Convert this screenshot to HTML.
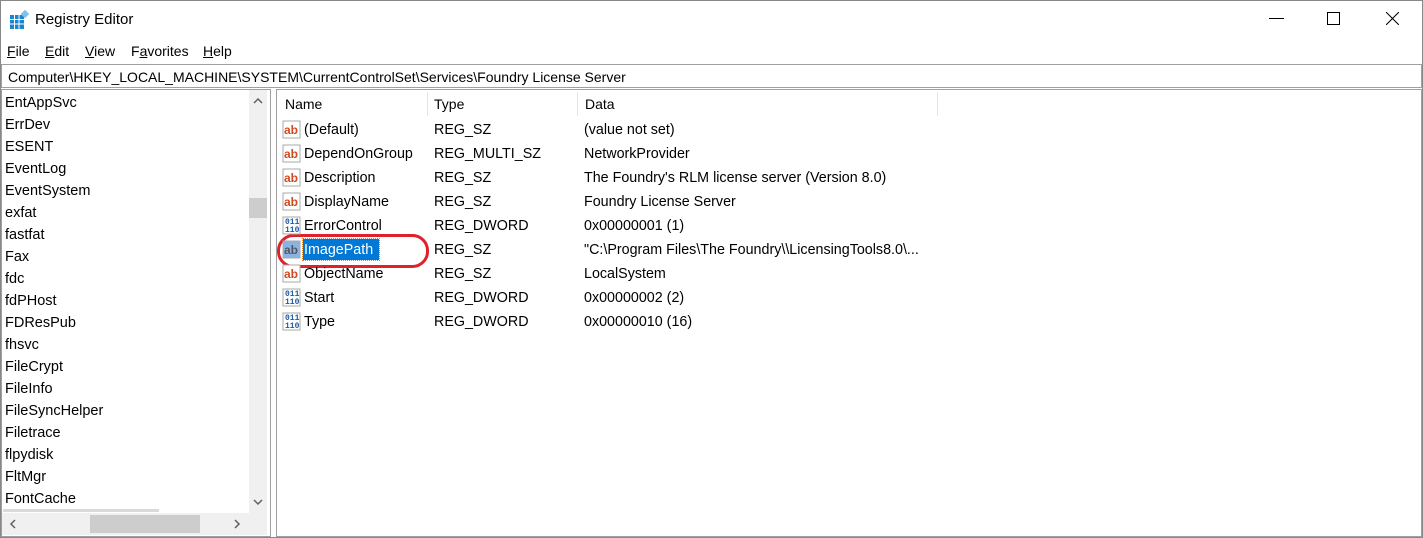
<!DOCTYPE html><html><head><style>
body{margin:0;width:1423px;height:538px;background:#fff;font-family:"Liberation Sans",sans-serif;font-size:14px;color:#000;position:relative;overflow:hidden}
.a{position:absolute;white-space:nowrap}
</style></head><body>
<div class="a" style="left:0;top:0;width:1423px;height:538px;border:1px solid #888;box-sizing:border-box"></div>
<svg class="a" style="left:9px;top:10px" width="20" height="20"><rect x="1" y="5" width="14" height="14" fill="#1a86d0"/><path d="M1 9.5H15M1 14H15M5.5 5V19M10 5V19" stroke="#fff" stroke-width="1"/><rect x="13" y="1" width="6" height="6" fill="#7fc2ee" transform="rotate(45 16 4)"/></svg>
<div class="a" style="left:35px;top:11px;font-size:15px">Registry Editor</div>
<div class="a" style="left:1269px;top:18px;width:15px;height:1px;background:#000"></div>
<div class="a" style="left:1327px;top:12px;width:11px;height:11px;border:1px solid #000"></div>
<svg class="a" style="left:1386px;top:12px" width="13" height="13"><path d="M0 0L13 13M13 0L0 13" stroke="#000"/></svg>
<div class="a" style="left:7px;top:43px"><u>F</u>ile</div>
<div class="a" style="left:45px;top:43px"><u>E</u>dit</div>
<div class="a" style="left:85px;top:43px"><u>V</u>iew</div>
<div class="a" style="left:131px;top:43px">F<u>a</u>vorites</div>
<div class="a" style="left:203px;top:43px"><u>H</u>elp</div>
<div class="a" style="left:1px;top:64px;width:1421px;height:24px;border:1px solid #a0a0a0;box-sizing:border-box"></div>
<div class="a" style="left:8px;top:69px">Computer\HKEY_LOCAL_MACHINE\SYSTEM\CurrentControlSet\Services\Foundry License Server</div>
<div class="a" style="left:1px;top:89px;width:270px;height:448px;border:1px solid #a0a0a0;box-sizing:border-box"></div>
<div class="a" style="left:276px;top:89px;width:1146px;height:448px;border:1px solid #a0a0a0;box-sizing:border-box"></div>
<div class="a" style="left:249px;top:90px;width:18px;height:424px;background:#f0f0f0"></div>
<div class="a" style="left:249px;top:198px;width:18px;height:20px;background:#cdcdcd"></div>
<svg class="a" style="left:252px;top:96px" width="12" height="10"><path d="M2 7L6 3L10 7" stroke="#606060" fill="none" stroke-width="1.5"/></svg>
<svg class="a" style="left:252px;top:497px" width="12" height="10"><path d="M2 3L6 7L10 3" stroke="#606060" fill="none" stroke-width="1.5"/></svg>
<div class="a" style="left:2px;top:513px;width:265px;height:22px;background:#f0f0f0"></div>
<div class="a" style="left:90px;top:515px;width:110px;height:18px;background:#cdcdcd"></div>
<div class="a" style="left:3px;top:509px;width:156px;height:3px;background:#dadada"></div>
<svg class="a" style="left:8px;top:518px" width="10" height="12"><path d="M7 2L3 6L7 10" stroke="#606060" fill="none" stroke-width="1.5"/></svg>
<svg class="a" style="left:232px;top:518px" width="10" height="12"><path d="M3 2L7 6L3 10" stroke="#606060" fill="none" stroke-width="1.5"/></svg>
<div class="a" style="left:5px;top:92px;line-height:22px;font-size:14.5px">EntAppSvc<br>ErrDev<br>ESENT<br>EventLog<br>EventSystem<br>exfat<br>fastfat<br>Fax<br>fdc<br>fdPHost<br>FDResPub<br>fhsvc<br>FileCrypt<br>FileInfo<br>FileSyncHelper<br>Filetrace<br>flpydisk<br>FltMgr<br>FontCache</div>
<div class="a" style="left:427px;top:92px;width:1px;height:24px;background:#e5e5e5"></div>
<div class="a" style="left:577px;top:92px;width:1px;height:24px;background:#e5e5e5"></div>
<div class="a" style="left:937px;top:92px;width:1px;height:24px;background:#e5e5e5"></div>
<div class="a" style="left:285px;top:96px">Name</div>
<div class="a" style="left:434px;top:96px">Type</div>
<div class="a" style="left:585px;top:96px">Data</div>
<div class="a" style="left:303px;top:239px;width:76px;height:21px;background:#0078d7;outline:1px dotted #e08020"></div>
<svg class="a" style="left:276px;top:233px" width="154" height="36"><rect x="2.5" y="2.5" width="149" height="31" rx="15" fill="none" stroke="#e0202a" stroke-width="3"/></svg>
<div class="a" style="left:304px;top:118px;line-height:24px;font-size:14.3px">(Default)<br>DependOnGroup<br>Description<br>DisplayName<br>ErrorControl<br><span style="color:#fff">ImagePath</span><br>ObjectName<br>Start<br>Type</div>
<div class="a" style="left:434px;top:118px;line-height:24px;font-size:14.3px">REG_SZ<br>REG_MULTI_SZ<br>REG_SZ<br>REG_SZ<br>REG_DWORD<br>REG_SZ<br>REG_SZ<br>REG_DWORD<br>REG_DWORD</div>
<div class="a" style="left:584px;top:118px;line-height:24px;font-size:14.3px">(value not set)<br>NetworkProvider<br>The Foundry's RLM license server (Version 8.0)<br>Foundry License Server<br>0x00000001 (1)<br>"C:\Program Files\The Foundry\\LicensingTools8.0\...<br>LocalSystem<br>0x00000002 (2)<br>0x00000010 (16)</div>
<svg class="a" style="left:282px;top:120px" width="20" height="216">
<g font-family="Liberation Sans" font-weight="bold" font-size="12">
<g><rect x="1" y="1" width="17" height="17" fill="#fff" stroke="#aaa"/><text x="2" y="14" fill="#d04a20">ab</text></g>
<g transform="translate(0,24)"><rect x="1" y="1" width="17" height="17" fill="#fff" stroke="#aaa"/><text x="2" y="14" fill="#d04a20">ab</text></g>
<g transform="translate(0,48)"><rect x="1" y="1" width="17" height="17" fill="#fff" stroke="#aaa"/><text x="2" y="14" fill="#d04a20">ab</text></g>
<g transform="translate(0,72)"><rect x="1" y="1" width="17" height="17" fill="#fff" stroke="#aaa"/><text x="2" y="14" fill="#d04a20">ab</text></g>
<g transform="translate(0,120)"><rect x="1" y="1" width="17" height="17" fill="#8ab4e0" stroke="#aaa"/><text x="2" y="14" fill="#556">ab</text></g>
<g transform="translate(0,144)"><rect x="1" y="1" width="17" height="17" fill="#fff" stroke="#aaa"/><text x="2" y="14" fill="#d04a20">ab</text></g>
</g>
<g font-family="Liberation Mono" font-weight="bold" font-size="8" fill="#1a5aa0">
<g transform="translate(0,96)"><rect x="1" y="1" width="17" height="17" fill="#fff" stroke="#aaa"/><text x="3" y="8">011</text><text x="3" y="16">110</text></g>
<g transform="translate(0,168)"><rect x="1" y="1" width="17" height="17" fill="#fff" stroke="#aaa"/><text x="3" y="8">011</text><text x="3" y="16">110</text></g>
<g transform="translate(0,192)"><rect x="1" y="1" width="17" height="17" fill="#fff" stroke="#aaa"/><text x="3" y="8">011</text><text x="3" y="16">110</text></g>
</g></svg>
</body></html>
